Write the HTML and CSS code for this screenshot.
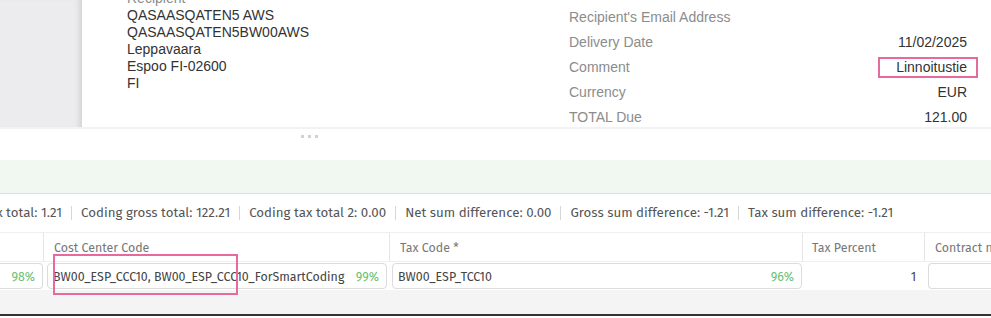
FILE: index.html
```html
<!DOCTYPE html>
<html>
<head>
<meta charset="utf-8">
<link rel="stylesheet" href="styles.css">
</head>
<body>
<div class="top">
  <div class="side"></div>
  <div class="panel">
    <div class="addr">
      <div class="lbl">Recipient</div>
      <div>QASAASQATEN5 AWS</div>
      <div>QASAASQATEN5BW00AWS</div>
      <div>Leppavaara</div>
      <div>Espoo FI-02600</div>
      <div>FI</div>
    </div>
    <div class="details">
      <div class="drow"><span class="lbl">Recipient's Agency Identity</span><span></span></div>
      <div class="drow"><span class="lbl">Recipient's Email Address</span><span></span></div>
      <div class="drow"><span class="lbl">Delivery Date</span><span class="val">11/02/2025</span></div>
      <div class="drow"><span class="lbl">Comment</span><span class="val hl">Linnoitustie</span></div>
      <div class="drow"><span class="lbl">Currency</span><span class="val">EUR</span></div>
      <div class="drow"><span class="lbl">TOTAL Due</span><span class="val">121.00</span></div>
    </div>
  </div>
</div>
<div class="resizer"><span class="dots"><i></i><i></i><i></i></span></div>
<div class="banner"></div>
<div class="summary">
  <span class="item cut"><span>Coding tax total: 1.21</span></span>
  <span class="sep"></span>
  <span class="item">Coding gross total: 122.21</span>
  <span class="sep"></span>
  <span class="item">Coding tax total 2: 0.00</span>
  <span class="sep"></span>
  <span class="item">Net sum difference: 0.00</span>
  <span class="sep"></span>
  <span class="item">Gross sum difference: -1.21</span>
  <span class="sep"></span>
  <span class="item">Tax sum difference: -1.21</span>
</div>
<div class="table">
  <div class="thead">
    <div class="th c0"></div>
    <div class="th c1">Cost Center Code</div>
    <div class="th c2">Tax Code *</div>
    <div class="th c3">Tax Percent</div>
    <div class="th c4">Contract number</div>
  </div>
  <div class="trow">
    <div class="td c0"><div class="inp first"><span></span><span class="pct">98%</span></div></div>
    <div class="td c1"><div class="inp"><span class="txt">BW00_ESP_CCC10, BW00_ESP_CCC10_ForSmartCoding</span><span class="pct">99%</span></div></div>
    <div class="td c2"><div class="inp"><span class="txt">BW00_ESP_TCC10</span><span class="pct">96%</span></div></div>
    <div class="td c3 num">1</div>
    <div class="td c4"><div class="inp last"></div></div>
  </div>
  <div class="mark"></div>
</div>
<div class="foot"></div>
</body>
</html>
```
FILE: styles.css
```css
* { box-sizing: border-box; }
html, body { margin: 0; padding: 0; background: #fff; overflow: hidden; }
body { width: 991px; height: 318px; }

.top {
  display: flex;
  height: 129px;
  border-bottom: 2px solid #f2f2f3;
  overflow: hidden;
  font-family: "Liberation Sans", Arial, sans-serif;
  font-size: 14px;
  color: #333;
}
.side {
  width: 82px;
  flex: none;
  background: #ececee;
  box-shadow: inset -6px 0 5px -3px #d4d4d6;
}
.panel {
  flex: 1;
  display: flex;
  background: #fff;
}
.addr {
  width: 487px;
  flex: none;
  padding-left: 45px;
  margin-top: -10px;
  line-height: 17px;
}
.lbl { color: #8c8c8c; }
.details {
  width: 398px;
  flex: none;
  margin-top: -20px;
}
.drow {
  height: 25px;
  display: flex;
  align-items: center;
  justify-content: space-between;
  line-height: 17px;
}
.val { color: #333; }
.hl {
  border: 2px solid #e8699b;
  padding: 0 9px 0 16px;
  margin-right: -11px;
  line-height: 17px;
}

.resizer {
  height: 31px;
  padding: 6px 0 0 301px;
}
.dots { display: flex; gap: 4px; }
.dots i { display: block; width: 3px; height: 3px; background: #d2d2d2; }

.banner {
  height: 34px;
  background: #f1f8f1;
  border-bottom: 1px solid #cde8cf;
}

.summary {
  height: 38px;
  display: flex;
  align-items: center;
  font-family: "Fira Sans", Lato, "Open Sans", sans-serif;
  font-size: 13.3px;
  line-height: 20px;
  color: #555;
  white-space: nowrap;
}
.item { display: block; }
.cut {
  width: 62px;
  display: flex;
  justify-content: flex-end;
  overflow: hidden;
}
.cut span { flex: none; }
.sep {
  width: 1px;
  height: 14px;
  background: #d6d6d6;
  margin: 0 9px;
}

.table {
  position: relative;
  font-family: "Fira Sans", Lato, "Open Sans", sans-serif;
  font-size: 12.4px;
  white-space: nowrap;
}
.thead {
  display: flex;
  height: 30px;
  border-top: 1px solid #efefef;
  border-bottom: 1px solid #efefef;
}
.th {
  display: flex;
  align-items: center;
  padding-left: 10px;
  color: #777;
  border-right: 1px solid #e6e6e6;
  overflow: hidden;
}
.c0 { width: 44px; flex: none; }
.c1 { width: 346px; flex: none; }
.c2 { width: 413px; flex: none; }
.c3 { width: 122px; flex: none; }
.c4 { flex: 1; }
.th.c1 { padding-left: 10px; }
.th.c3 { padding-left: 9px; }
.th.c4 { border-right: none; }

.trow {
  display: flex;
  height: 28px;
  padding-top: 1px;
}
.td { height: 26px; }
.td.c0 { padding-right: 1px; }
.td.c1 { padding: 0 3px 0 3px; }
.td.c2 { padding: 0 1px 0 2px; }
.td.c4 { padding-left: 3px; }
.inp {
  height: 26px;
  border: 1px solid #dcdcdc;
  border-radius: 4px;
  display: flex;
  align-items: center;
  justify-content: space-between;
  padding: 0 7px 0 5px;
  color: #444;
  background: #fff;
}
.inp.first { border-left: none; border-radius: 0 4px 4px 0; }
.inp.last { border-right: none; border-radius: 4px 0 0 4px; }
.pct { color: #6cbf72; }
.num {
  display: flex;
  align-items: center;
  justify-content: flex-end;
  padding-right: 9px;
  color: #444;
}
.mark {
  position: absolute;
  left: 53px;
  top: 22px;
  width: 185px;
  height: 41px;
  border: 2px solid #e8699b;
}

.foot {
  height: 26px;
  background: #f4f4f4;
  border-bottom: 2px solid #333;
}
```
